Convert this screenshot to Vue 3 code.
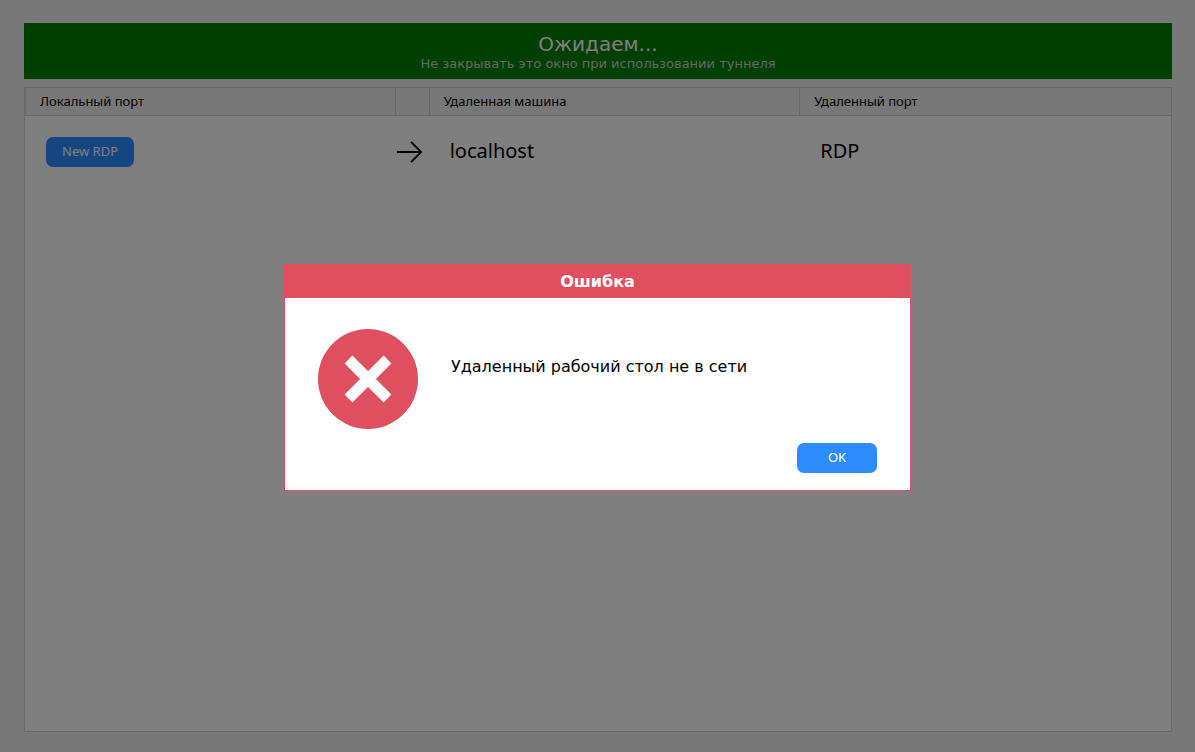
<script setup>
import { ref } from 'vue'

const tunnels = [{ local: 'New RDP', host: 'localhost', port: 'RDP' }]
const errorOpen = ref(true)
</script>

<template>
  <main class="page">
    <header class="banner">
      <h1>Ожидаем...</h1>
      <p>Не закрывать это окно при использовании туннеля</p>
    </header>

    <section class="panel">
      <table class="tunnels">
        <colgroup>
          <col />
          <col class="col-arrow" />
          <col />
          <col />
        </colgroup>
        <thead>
          <tr>
            <th>Локальный порт</th>
            <th></th>
            <th>Удаленная машина</th>
            <th>Удаленный порт</th>
          </tr>
        </thead>
        <tbody>
          <tr v-for="t in tunnels" :key="t.host">
            <td><button type="button" class="btn">{{ t.local }}</button></td>
            <td class="arrow">
              <svg width="34" height="24" viewBox="0 0 34 24" fill="none" stroke="#000" stroke-width="1.8" aria-hidden="true">
                <path d="M1 12H25.500M15 1.800L25.200 12L15 22.200" />
              </svg>
            </td>
            <td>{{ t.host }}</td>
            <td>{{ t.port }}</td>
          </tr>
        </tbody>
      </table>
    </section>

    <div v-if="errorOpen" class="overlay">
      <div class="dialog" role="alertdialog" aria-labelledby="dlg-title" aria-describedby="dlg-text">
        <h2 id="dlg-title">Ошибка</h2>
        <div class="dialog-body">
          <svg class="error-icon" width="100" height="100" viewBox="0 0 100 100" aria-hidden="true">
            <circle cx="50" cy="50" r="50" fill="#e04f5f" />
            <path d="M30.500 30.500L69.500 69.500M69.500 30.500L30.500 69.500" stroke="#fff" stroke-width="11" />
          </svg>
          <p id="dlg-text">Удаленный рабочий стол не в сети</p>
        </div>
        <div class="dialog-actions">
          <button type="button" class="btn ok" @click="errorOpen = false">OK</button>
        </div>
      </div>
    </div>
  </main>
</template>

<style>
body {
  margin: 0;
  background: #f0f0f0;
}
</style>

<style scoped>
.page {
  box-sizing: border-box;
  display: flex;
  flex-direction: column;
  gap: 8px;
  min-height: 100vh;
  padding: 23px 23px 20px 24px;
  background: #f0f0f0;
  color: #000;
  font-family: Tahoma, "Noto Sans", sans-serif;
}

.banner {
  box-sizing: border-box;
  height: 56px;
  padding-top: 9px;
  background: #008000;
  color: #fff;
  text-align: center;
  font-family: Verdana, "DejaVu Sans", sans-serif;
}

.banner h1 {
  margin: 0;
  font-size: 20px;
  font-weight: 400;
  line-height: 24px;
}

.banner p {
  margin: 0;
  font-size: 13px;
  line-height: 16px;
  color: #d0d0d0;
}

.panel {
  flex: 1;
  border: 1px solid #d0d0d0;
  background: #fff;
}

.tunnels {
  width: 100%;
  border-collapse: separate;
  border-spacing: 0;
  table-layout: fixed;
}

.col-arrow {
  width: 34px;
}

th {
  box-sizing: border-box;
  height: 28px;
  padding: 0 14px 2px;
  border-right: 1px solid #d0d0d0;
  border-bottom: 1px solid #d0d0d0;
  background: #f0f0f0;
  font-size: 13px;
  font-weight: 400;
  line-height: 20px;
  text-align: left;
}

th:first-child {
  border-left: 1px solid #d0d0d0;
}

th:last-child {
  border-right: 0;
}

td {
  box-sizing: border-box;
  height: 72px;
  padding: 0 20px 2px;
  font-size: 20px;
  line-height: 28px;
  vertical-align: middle;
}

td:first-child {
  padding: 0 20px 0 21px;
}

td.arrow {
  padding: 0;
}

.arrow svg {
  display: block;
}

.btn {
  display: block;
  height: 30px;
  padding: 0 16px 2px;
  border: 0;
  border-radius: 7px;
  background: #2d8cff;
  color: #fff;
  font-family: inherit;
  font-size: 13px;
  line-height: 20px;
}

.overlay {
  position: fixed;
  inset: 0;
  display: flex;
  align-items: center;
  justify-content: center;
  padding-top: 3px;
  background: rgba(0, 0, 0, 0.5);
}

.dialog {
  box-sizing: border-box;
  width: 627px;
  max-width: 90%;
  border: 1px solid #e04f5f;
  background: #fff;
}

.dialog h2 {
  margin: 0;
  background: #e04f5f;
  color: #fff;
  font-family: Verdana, "DejaVu Sans", sans-serif;
  font-size: 16px;
  font-weight: 700;
  line-height: 33px;
  text-align: center;
}

.dialog-body {
  display: flex;
  gap: 33px;
  padding: 31px 33px 0;
}

.error-icon {
  flex: none;
}

.dialog-body p {
  margin: 28px 0 0;
  font-family: Verdana, "DejaVu Sans", sans-serif;
  font-size: 16px;
  line-height: 20px;
}

.dialog-actions {
  display: flex;
  justify-content: flex-end;
  padding: 14px 33px 17px;
}

.ok {
  width: 80px;
}
</style>
